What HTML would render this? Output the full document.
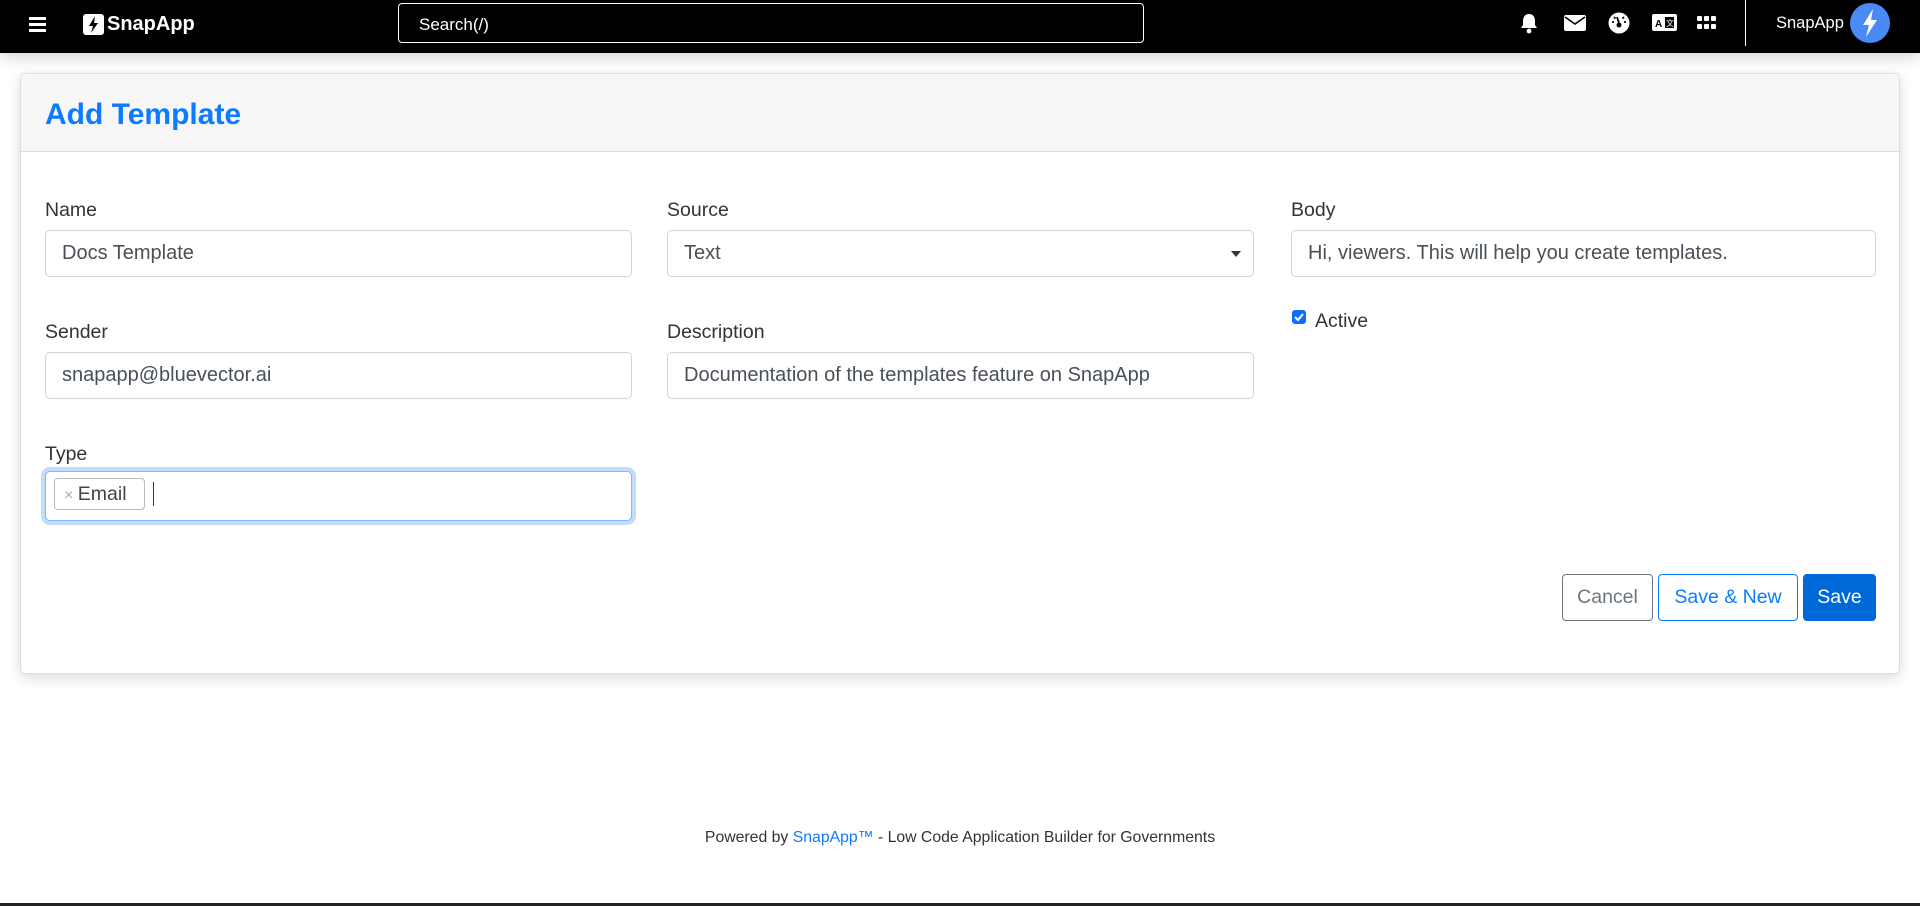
<!DOCTYPE html>
<html><head><meta charset="utf-8"><style>
*{box-sizing:border-box;margin:0;padding:0}
body{width:1920px;height:906px;background:#fff;font-family:"Liberation Sans",sans-serif;color:#212529;position:relative;overflow:hidden}
.nav{position:absolute;left:0;top:0;width:1920px;height:53px;background:#000;box-shadow:0 4px 14px rgba(0,0,0,.18)}
.abs{position:absolute}
.card{position:absolute;left:20px;top:73px;width:1880px;height:601px;border:1px solid #ddd;border-radius:5px;box-shadow:0 4px 14px rgba(0,0,0,.15);background:#fff;overflow:hidden}
.chead{height:78px;background:#f7f7f7;border-bottom:1px solid #ddd}
.chead h1{position:absolute;left:24px;top:24px;font-size:30px;font-weight:bold;color:#0d7bff}
label{position:absolute;font-size:19.5px;color:#333}
.inp{position:absolute;height:47px;border:1px solid #ced4da;border-radius:5px;font-size:20px;color:#495057;padding:0 16px;line-height:45px;background:#fff}
.btn{position:absolute;top:573px;height:47px;border-radius:4px;font-size:19.5px;line-height:45px;text-align:center}
</style></head><body>
<div class="nav">
 <div class="abs" style="left:29px;top:17px;width:17px;height:3px;background:#fff;box-shadow:0 6px 0 #fff,0 12px 0 #fff"></div>
 <div class="abs" style="left:83px;top:14px;width:21px;height:21px;background:#fff;border-radius:3px"><svg width="21" height="21" viewBox="0 0 21 21"><path d="M12 2 L6 12 H10 L8 19 L15 9 H11 Z" fill="#000"/></svg></div>
 <div class="abs" style="left:107px;top:13px;color:#fff;font-weight:bold;font-size:20px">SnapApp</div>
 <div class="abs" style="left:398px;top:3px;width:746px;height:40px;border:1px solid #fff;border-radius:4px;color:#fff;font-size:17px;padding:11px 20px">Search(/)</div>
 <svg class="abs" style="left:1519px;top:13px" width="20" height="21" viewBox="0 0 20 21"><path d="M10 1c-4 0-6 3-6 7v4l-2 3h16l-2-3V8c0-4-2-7-6-7z" fill="#fff"/><circle cx="10" cy="18" r="2.4" fill="#fff"/></svg>
 <svg class="abs" style="left:1564px;top:15px" width="22" height="16" viewBox="0 0 22 16"><rect width="22" height="16" rx="2" fill="#fff"/><path d="M1 2 L11 9 L21 2" stroke="#000" stroke-width="1.6" fill="none"/></svg>
 <svg class="abs" style="left:1608px;top:12px" width="22" height="22" viewBox="0 0 22 22"><circle cx="11" cy="11" r="10.5" fill="#fff"/><path d="M11 11 L9 5 M4 10h2M16 10h2M6 5l1.5 1.5M16 5l-1.5 1.5" stroke="#000" stroke-width="1.8"/><circle cx="11" cy="13" r="2.5" fill="#000"/></svg>
 <svg class="abs" style="left:1652px;top:14px" width="25" height="17" viewBox="0 0 25 17"><rect width="25" height="17" rx="2" fill="#fff"/><text x="3" y="13" font-size="10" font-weight="bold" font-family="Liberation Sans" fill="#000">A</text><rect x="13" y="3" width="9" height="11" fill="#000"/><text x="14" y="12" font-size="8" fill="#fff" font-family="Liberation Sans">文</text></svg>
 <svg class="abs" style="left:1697px;top:16px" width="19" height="14" viewBox="0 0 19 14"><g fill="#fff"><rect x="0" y="0" width="5" height="5" rx="1"/><rect x="7" y="0" width="5" height="5" rx="1"/><rect x="14" y="0" width="5" height="5" rx="1"/><rect x="0" y="8" width="5" height="5" rx="1"/><rect x="7" y="8" width="5" height="5" rx="1"/><rect x="14" y="8" width="5" height="5" rx="1"/></g></svg>
 <div class="abs" style="left:1745px;top:0;width:1px;height:46px;background:#fff"></div>
 <div class="abs" style="left:1776px;top:14px;color:#fff;font-size:16.5px">SnapApp</div>
 <svg class="abs" style="left:1850px;top:3px" width="40" height="40" viewBox="0 0 40 40"><circle cx="20" cy="20" r="20" fill="#4a8af4"/><path d="M23 6 L13 22 H19 L16 34 L27 17 H21 Z" fill="#fff"/></svg>
</div>
<div class="card">
 <div class="chead"><h1>Add Template</h1></div>
 <label style="left:24px;top:125px">Name</label>
 <div class="inp" style="left:24px;top:156px;width:587px">Docs Template</div>
 <label style="left:646px;top:125px">Source</label>
 <div class="inp" style="left:646px;top:156px;width:587px">Text<span style="position:absolute;right:12px;top:20px;border:5px solid transparent;border-top:6px solid #333;border-bottom:0"></span></div>
 <label style="left:1270px;top:125px">Body</label>
 <div class="inp" style="left:1270px;top:156px;width:585px">Hi, viewers. This will help you create templates.</div>
 <div class="abs" style="left:1271px;top:236px;width:14px;height:14px;background:#0d6efd;border-radius:3px"><svg width="14" height="14" viewBox="0 0 14 14"><path d="M3 7l3 3 5-6" stroke="#fff" stroke-width="2" fill="none"/></svg></div>
 <label style="left:1294px;top:236px">Active</label>
 <label style="left:24px;top:247px">Sender</label>
 <div class="inp" style="left:24px;top:278px;width:587px">snapapp@bluevector.ai</div>
 <label style="left:646px;top:247px">Description</label>
 <div class="inp" style="left:646px;top:278px;width:587px">Documentation of the templates feature on SnapApp</div>
 <label style="left:24px;top:369px">Type</label>
 <div class="inp" style="left:24px;top:397px;width:587px;height:50px;border:1px solid #86b7fe;box-shadow:0 0 0 4px rgba(13,110,253,.25);padding:0 6px">
  <span style="position:absolute;left:8px;top:6px;height:32px;width:91px;border:1px solid #bbb;border-radius:4px;line-height:30px;padding-left:9px;font-size:19.5px;color:#444"><span style="color:#aaa;font-size:16px">× </span>Email</span>
  <span style="position:absolute;left:107px;top:10px;width:1px;height:24px;background:#333"></span>
 </div>
 <div class="btn" style="left:1541px;top:500px;width:91px;border:1px solid #6c757d;color:#6c757d">Cancel</div>
 <div class="btn" style="left:1637px;top:500px;width:140px;border:1px solid #0d7bff;color:#0d7bff">Save &amp; New</div>
 <div class="btn" style="left:1782px;top:500px;width:73px;background:#0069d9;color:#fff;border:1px solid #0069d9">Save</div>
</div>
<div class="abs" style="left:0;width:1920px;top:829px;text-align:center;font-size:15.8px;color:#333">Powered by <span style="color:#0d7bff">SnapApp™</span> - Low Code Application Builder for Governments</div>
<div class="abs" style="left:0;top:903px;width:1920px;height:3px;background:#222"></div>
</body></html>
